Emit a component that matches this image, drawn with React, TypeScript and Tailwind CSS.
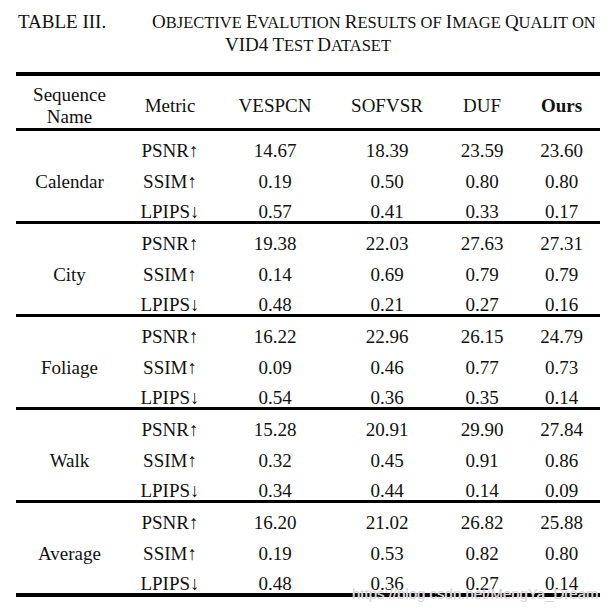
import { Fragment } from "react";

const groups = [
    {
        name: 'Calendar',
        rows: [
            ['PSNR↑', '14.67', '18.39', '23.59', '23.60'],
            ['SSIM↑', '0.19', '0.50', '0.80', '0.80'],
            ['LPIPS↓', '0.57', '0.41', '0.33', '0.17'],
        ],
    },
    {
        name: 'City',
        rows: [
            ['PSNR↑', '19.38', '22.03', '27.63', '27.31'],
            ['SSIM↑', '0.14', '0.69', '0.79', '0.79'],
            ['LPIPS↓', '0.48', '0.21', '0.27', '0.16'],
        ],
    },
    {
        name: 'Foliage',
        rows: [
            ['PSNR↑', '16.22', '22.96', '26.15', '24.79'],
            ['SSIM↑', '0.09', '0.46', '0.77', '0.73'],
            ['LPIPS↓', '0.54', '0.36', '0.35', '0.14'],
        ],
    },
    {
        name: 'Walk',
        rows: [
            ['PSNR↑', '15.28', '20.91', '29.90', '27.84'],
            ['SSIM↑', '0.32', '0.45', '0.91', '0.86'],
            ['LPIPS↓', '0.34', '0.44', '0.14', '0.09'],
        ],
    },
    {
        name: 'Average',
        rows: [
            ['PSNR↑', '16.20', '21.02', '26.82', '25.88'],
            ['SSIM↑', '0.19', '0.53', '0.82', '0.80'],
            ['LPIPS↓', '0.48', '0.36', '0.27', '0.14'],
        ],
    },
];

const cols = "grid grid-cols-[107px_94px_116px_108px_82px_77px]";

// small caps by hand: capitals stay full size, the rest goes upper case at a smaller size
function SmallCaps({ text }: { text: string }) {
    const parts = text.match(/[A-Z0-9]+|[^A-Z0-9]+/g) || [];
    return (
        <>
            {parts.map((p, i) =>
                /^[A-Z0-9]+$/.test(p)
                    ? <span key={i}>{p}</span>
                    : <span key={i} className="text-[16.5px] uppercase">{p}</span>
            )}
        </>
    );
}

export default function App() {
    return (
        <main className="relative w-[614px] h-[612px] bg-white text-[#111] font-['Liberation_Serif',serif] text-[19px]">
            <header className="pt-[11px] leading-[22px]">
                <div className="flex">
                    <span className="pl-[18px] w-[152px]">TABLE III.</span>
                    <span className="whitespace-nowrap"><SmallCaps text="Objective Evalution Results of Image Qualit on" /></span>
                </div>
                <div className="text-center pl-[16px] w-[600px]"><SmallCaps text="VID4 Test Dataset" /></div>
            </header>

            <div className="ml-[16px] w-[584px] mt-[15px] border-t-[4px] border-black">
                <div className={`${cols} h-[52px] pt-[8px] items-center text-center leading-[22px]`}>
                    <div>Sequence<br />Name</div>
                    <div>Metric</div>
                    <div>VESPCN</div>
                    <div>SOFVSR</div>
                    <div>DUF</div>
                    <div className="font-bold">Ours</div>
                </div>

                {groups.map((g) => (
                    <div
                        key={g.name}
                        className={`${cols} h-[93px] pt-[11px] grid-rows-[18px_18px_18px] gap-y-[12.5px] leading-[18px] text-center border-t-[3px] border-black`}
                    >
                        <div className="row-span-3 flex items-center justify-center">{g.name}</div>
                        {g.rows.map((r, ri) => (
                            <Fragment key={ri}>
                                {r.map((c, ci) => (
                                    <div key={ci} className={ci === 0 ? "col-start-2" : ""}>{c}</div>
                                ))}
                            </Fragment>
                        ))}
                    </div>
                ))}
                <div className="border-t-[4px] border-black"></div>
            </div>

            <div className="absolute left-[352px] top-[585px] text-[15px] leading-[18px] font-['Liberation_Sans',sans-serif] text-[#d4d4d4] [text-shadow:0_0_1px_#fff]">
                https://blog.csdn.net/MengYa_Dream
            </div>
        </main>
    );
}
